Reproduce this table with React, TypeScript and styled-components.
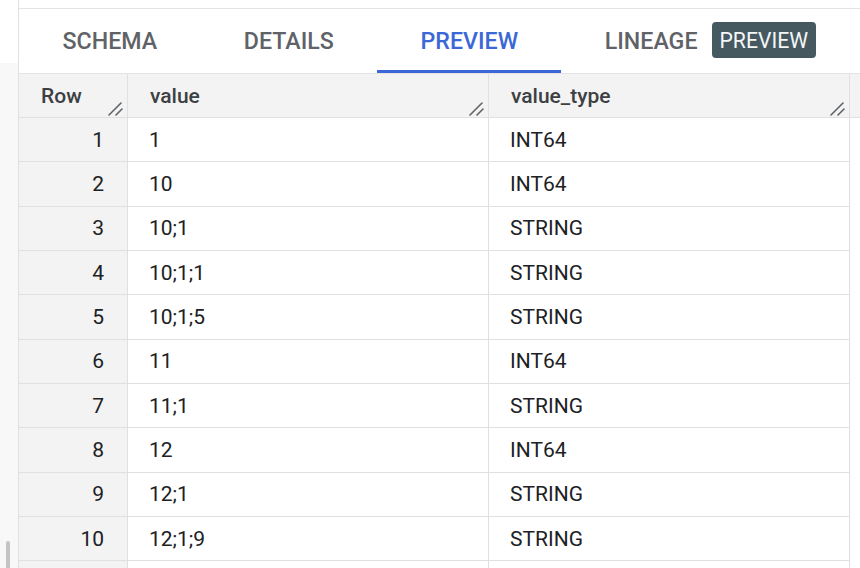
import React from "react";
import styled, { createGlobalStyle } from "styled-components";

const Global = createGlobalStyle`
  html, body { margin: 0; padding: 0; background: #fff; overflow: hidden; }
  body { font-family: Roboto, "Noto Sans", Arial, sans-serif; }
  #root { height: 100vh; }
`;

const Page = styled.div`
  display: flex;
  height: 568px;
  width: 860px;
  overflow: hidden;
`;

const Rail = styled.div`
  width: 18px;
  flex: none;
  display: flex;
  flex-direction: column;
  border-right: 1px solid #e0e0e0;
`;

const RailTop = styled.div`
  height: 63px;
  flex: none;
  background: #fff;
`;

const RailBody = styled.div`
  flex: 1;
  background: #f8f8f8;
  display: flex;
  flex-direction: column;
  justify-content: flex-end;
`;

const Thumb = styled.div`
  width: 4px;
  height: 27px;
  margin-left: 6px;
  border-radius: 2px 2px 0 0;
  background: #c4c4c4;
`;

const Main = styled.div`
  flex: 1;
  display: flex;
  flex-direction: column;
  min-width: 0;
  overflow: hidden;
`;

const TopStrip = styled.div`
  height: 8px;
  flex: none;
  border-bottom: 1px solid #e3e3e3;
`;

const TabBar = styled.div`
  height: 65px;
  flex: none;
  display: flex;
  align-items: stretch;
  border-bottom: 1px solid #e3e3e3;
  box-sizing: border-box;
`;

const Tab = styled.div<{ $active?: boolean; $last?: boolean }>`
  display: flex;
  align-items: center;
  padding: 3px ${(p) => (p.$last ? "0" : "43.2px")} 0 43.5px;
  font-size: 23.2px;
  font-weight: 500;
  color: ${(p) => (p.$active ? "#3b68d6" : "#5f6368")};
  border-bottom: 3px solid ${(p) => (p.$active ? "#3b68d6" : "transparent")};
`;

const Badge = styled.span`
  margin-left: 14px;
  height: 36px;
  display: inline-flex;
  align-items: center;
  padding: 0 8px;
  border-radius: 4px;
  background: #465961;
  color: #f4f6f7;
  font-size: 21.2px;
  font-weight: 400;
  margin-top: -2px;
`;

const Grid = styled.div`
  flex: none;
  display: grid;
  grid-template-columns: 109px 361px 361px 1fr;
  grid-template-rows: 44px;
  grid-auto-rows: 44.35px;
`;

const HeadCell = styled.div<{ $filler?: boolean }>`
  background: #f3f3f3;
  border-bottom: 1px solid #e0e0e0;
  border-right: ${(p) => (p.$filler ? "none" : "1px solid #e0e0e0")};
  display: flex;
  justify-content: space-between;
  align-items: center;
  padding-left: 22px;
  font-size: 21px;
  font-weight: 500;
  color: #3c4043;
  box-sizing: border-box;
`;

const Handle = styled.svg`
  align-self: flex-end;
  margin: 0 4px 1px 0;
  flex: none;
`;

const Cell = styled.div<{ $index?: boolean; $filler?: boolean }>`
  box-sizing: border-box;
  display: flex;
  align-items: center;
  font-size: 21px;
  color: #202124;
  background: ${(p) => (p.$index ? "#f3f3f3" : "#fff")};
  border-bottom: ${(p) => (p.$filler ? "none" : "1px solid #e0e0e0")};
  border-right: ${(p) => (p.$filler ? "none" : "1px solid #e0e0e0")};
  justify-content: ${(p) => (p.$index ? "flex-end" : "flex-start")};
  padding: ${(p) => (p.$index ? "0 23px 0 0" : "0 0 0 21px")};
`;

const ResizeIcon = () => (
  <Handle width="15" height="15" viewBox="0 0 15 15">
    <path d="M1 14 L13 2" stroke="#5f6368" strokeWidth="1.6" strokeLinecap="round" />
    <path d="M8 14 L14 8" stroke="#5f6368" strokeWidth="1.6" strokeLinecap="round" />
  </Handle>
);

const rows: [string, string][] = [
  ["1", "INT64"],
  ["10", "INT64"],
  ["10;1", "STRING"],
  ["10;1;1", "STRING"],
  ["10;1;5", "STRING"],
  ["11", "INT64"],
  ["11;1", "STRING"],
  ["12", "INT64"],
  ["12;1", "STRING"],
  ["12;1;9", "STRING"],
];

export default function App() {
  return (
    <>
      <Global />
      <Page>
        <Rail>
          <RailTop />
          <RailBody>
            <Thumb />
          </RailBody>
        </Rail>
        <Main>
          <TopStrip />
          <TabBar>
            <Tab>SCHEMA</Tab>
            <Tab>DETAILS</Tab>
            <Tab $active>PREVIEW</Tab>
            <Tab $last>
              LINEAGE
              <Badge>PREVIEW</Badge>
            </Tab>
          </TabBar>
          <Grid>
            <HeadCell>
              Row
              <ResizeIcon />
            </HeadCell>
            <HeadCell>
              value
              <ResizeIcon />
            </HeadCell>
            <HeadCell>
              value_type
              <ResizeIcon />
            </HeadCell>
            <HeadCell $filler />
            {rows.map(([v, t], i) => (
              <React.Fragment key={i}>
                <Cell $index>{i + 1}</Cell>
                <Cell>{v}</Cell>
                <Cell>{t}</Cell>
                <Cell $filler />
              </React.Fragment>
            ))}
            <Cell $index />
            <Cell />
            <Cell />
            <Cell $filler />
          </Grid>
        </Main>
      </Page>
    </>
  );
}
